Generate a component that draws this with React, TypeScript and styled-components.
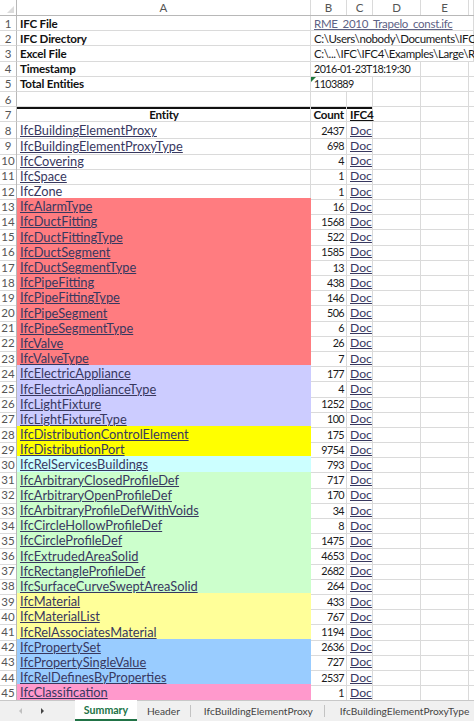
import React from 'react';
import styled, { createGlobalStyle, css } from 'styled-components';

const GlobalStyle = createGlobalStyle`
  html, body {
    margin: 0;
    padding: 0;
    background: #ffffff;
    overflow: hidden;
  }
  body {
    font-family: Lato, 'Open Sans', sans-serif;
    font-size: 12.8px;
    color: #1f1f1f;
  }
`;

const COLS = '17px 294px 36px 26px 48px 48px 1fr';
const GRID = '#dadada';
const ROW_H = '15.2px';

const Sheet = styled.div`
  width: 474px;
  height: 721px;
  display: flex;
  flex-direction: column;
  overflow: hidden;
`;

const Rows = styled.div`
  flex: 1;
  overflow: hidden;
`;

const HeaderRow = styled.div`
  display: grid;
  grid-template-columns: ${COLS};
  height: 16px;
  border-bottom: 1px solid #b8b8b8;
  box-sizing: border-box;
`;

const ColHead = styled.div`
  position: relative;
  display: flex;
  align-items: center;
  justify-content: center;
  color: #555;
  font-size: 11.5px;
  border-right: 1px solid ${GRID};
`;

const Corner = styled(ColHead)`
  border-right: 1px solid #b8b8b8;
  &::after {
    content: '';
    position: absolute;
    right: 2px;
    bottom: 2px;
    border-left: 7px solid transparent;
    border-bottom: 7px solid #dcdcdc;
  }
`;

const Row = styled.div`
  display: grid;
  grid-template-columns: ${COLS};
  height: ${ROW_H};
`;

const RowNum = styled.div`
  display: flex;
  align-items: center;
  justify-content: center;
  color: #555;
  font-size: 11.5px;
  border-right: 1px solid #b8b8b8;
  border-bottom: 1px solid ${GRID};
  box-sizing: border-box;
`;

const Cell = styled.div<{ $fill?: string; $align?: 'left' | 'right' | 'center'; $span?: number; $thick?: boolean }>`
  position: relative;
  display: flex;
  align-items: center;
  justify-content: ${(p) => (p.$align === 'right' ? 'flex-end' : p.$align === 'center' ? 'center' : 'flex-start')};
  padding: 0 2px 0 3px;
  white-space: nowrap;
  box-sizing: border-box;
  border-right: 1px solid ${(p) => p.$fill || GRID};
  border-bottom: 1px solid ${(p) => p.$fill || GRID};
  background: ${(p) => p.$fill || 'transparent'};
  grid-column: span ${(p) => p.$span || 1};
  ${(p) =>
    p.$thick &&
    css`
      box-shadow: inset 0 2px 0 #111;
    `}
`;

const Bold = styled.span`
  font-weight: 700;
  font-size: 11.6px;
  letter-spacing: -0.2px;
  color: #111;
`;

const Num = styled.span`
  font-size: 10.8px;
  letter-spacing: -0.6px;
  color: #1a1a1a;
`;

const Meta = styled.span`
  font-size: 11.5px;
  letter-spacing: -0.38px;
  color: #1a1a1a;
`;

const Link = styled.span<{ $plain?: boolean }>`
  color: #38385f;
  text-decoration: ${(p) => (p.$plain ? 'none' : 'underline')};
  text-decoration-thickness: 1px;
  text-underline-offset: 1px;
`;

const DocLink = styled(Link)`
  font-size: 12.2px;
`;

const HeadLink = styled(Bold)`
  text-decoration: underline;
  text-decoration-thickness: 1px;
  text-underline-offset: 1px;
`;

const FileLink = styled(Meta)`
  color: #5d6285;
  letter-spacing: -0.3px;
  text-decoration: underline;
  text-decoration-thickness: 1px;
  text-underline-offset: 1px;
`;

const Marker = styled.span`
  position: absolute;
  left: 0;
  top: 0;
  border-top: 5px solid #1f7a3c;
  border-right: 5px solid transparent;
`;

const TabBar = styled.div`
  height: 21px;
  display: flex;
  align-items: stretch;
  background: #f0f0f0;
  border-top: 1px solid #c8c8c8;
  box-sizing: border-box;
  font-size: 10.2px;
  color: #444;
  & > * {
    flex-shrink: 0;
  }
`;

const Nav = styled.div`
  width: 75px;
  display: flex;
  align-items: center;
  gap: 19px;
  padding-left: 19px;
  box-sizing: border-box;
`;

const Arrow = styled.span<{ $dir: 'left' | 'right'; $on?: boolean }>`
  width: 0;
  height: 0;
  border-top: 3px solid transparent;
  border-bottom: 3px solid transparent;
  ${(p) =>
    p.$dir === 'left'
      ? css`border-right: 3px solid ${p.$on ? '#444' : '#c0c0c0'};`
      : css`border-left: 3px solid ${p.$on ? '#444' : '#c0c0c0'};`}
`;

const Tab = styled.div<{ $active?: boolean; $sep?: boolean; $pl: number; $pr: number }>`
  display: flex;
  align-items: center;
  padding: 0 ${(p) => p.$pr}px 0 ${(p) => p.$pl}px;
  box-sizing: border-box;
  white-space: nowrap;
  position: relative;
  ${(p) =>
    p.$active &&
    css`
      width: 62px;
      justify-content: center;
      background: #ffffff;
      color: #217346;
      font-weight: 700;
      font-size: 10.6px;
      border-bottom: 2px solid #217346;
      margin-top: -1px;
    `}
  ${(p) =>
    p.$sep &&
    css`
      &::after {
        content: '';
        position: absolute;
        right: 0;
        top: 4px;
        bottom: 4px;
        border-right: 1px solid #c3c3c3;
      }
    `}
`;

const RED = '#ff7c80';
const LAV = '#ccccff';
const YEL = '#ffff00';
const CYN = '#ccffff';
const GRN = '#ccffcc';
const LYEL = '#ffff99';
const BLU = '#99ccff';
const PNK = '#ff99cc';

type Entity = { name: string; count: number; fill?: string; plain?: boolean };

const entities: Entity[] = [
  { name: 'IfcBuildingElementProxy', count: 2437 },
  { name: 'IfcBuildingElementProxyType', count: 698 },
  { name: 'IfcCovering', count: 4 },
  { name: 'IfcSpace', count: 1 },
  { name: 'IfcZone', count: 1, plain: true },
  { name: 'IfcAlarmType', count: 16, fill: RED },
  { name: 'IfcDuctFitting', count: 1568, fill: RED },
  { name: 'IfcDuctFittingType', count: 522, fill: RED },
  { name: 'IfcDuctSegment', count: 1585, fill: RED },
  { name: 'IfcDuctSegmentType', count: 13, fill: RED },
  { name: 'IfcPipeFitting', count: 438, fill: RED },
  { name: 'IfcPipeFittingType', count: 146, fill: RED },
  { name: 'IfcPipeSegment', count: 506, fill: RED },
  { name: 'IfcPipeSegmentType', count: 6, fill: RED },
  { name: 'IfcValve', count: 26, fill: RED },
  { name: 'IfcValveType', count: 7, fill: RED },
  { name: 'IfcElectricAppliance', count: 177, fill: LAV },
  { name: 'IfcElectricApplianceType', count: 4, fill: LAV },
  { name: 'IfcLightFixture', count: 1252, fill: LAV },
  { name: 'IfcLightFixtureType', count: 100, fill: LAV },
  { name: 'IfcDistributionControlElement', count: 175, fill: YEL },
  { name: 'IfcDistributionPort', count: 9754, fill: YEL },
  { name: 'IfcRelServicesBuildings', count: 793, fill: CYN },
  { name: 'IfcArbitraryClosedProfileDef', count: 717, fill: GRN },
  { name: 'IfcArbitraryOpenProfileDef', count: 170, fill: GRN },
  { name: 'IfcArbitraryProfileDefWithVoids', count: 34, fill: GRN },
  { name: 'IfcCircleHollowProfileDef', count: 8, fill: GRN },
  { name: 'IfcCircleProfileDef', count: 1475, fill: GRN },
  { name: 'IfcExtrudedAreaSolid', count: 4653, fill: GRN },
  { name: 'IfcRectangleProfileDef', count: 2682, fill: GRN },
  { name: 'IfcSurfaceCurveSweptAreaSolid', count: 264, fill: GRN },
  { name: 'IfcMaterial', count: 433, fill: LYEL },
  { name: 'IfcMaterialList', count: 767, fill: LYEL },
  { name: 'IfcRelAssociatesMaterial', count: 1194, fill: LYEL },
  { name: 'IfcPropertySet', count: 2636, fill: BLU },
  { name: 'IfcPropertySingleValue', count: 727, fill: BLU },
  { name: 'IfcRelDefinesByProperties', count: 2537, fill: BLU },
  { name: 'IfcClassification', count: 1, fill: PNK },
];

const Blank = () => <Cell />;

const App = () => {
  return (
    <Sheet>
      <GlobalStyle />
      <Rows>
        <HeaderRow>
          <Corner />
          {['A', 'B', 'C', 'D', 'E', ''].map((c, i) => (
            <ColHead key={i}>{c}</ColHead>
          ))}
        </HeaderRow>

        <Row>
          <RowNum>1</RowNum>
          <Cell><Bold>IFC File</Bold></Cell>
          <Cell $span={5}><FileLink>RME_2010_Trapelo_const.ifc</FileLink></Cell>
        </Row>
        <Row>
          <RowNum>2</RowNum>
          <Cell><Bold>IFC Directory</Bold></Cell>
          <Cell $span={5}><Meta>C:\Users\nobody\Documents\IFC\</Meta></Cell>
        </Row>
        <Row>
          <RowNum>3</RowNum>
          <Cell><Bold>Excel File</Bold></Cell>
          <Cell $span={5}><Meta>C:\...\IFC\IFC4\Examples\Large\R</Meta></Cell>
        </Row>
        <Row>
          <RowNum>4</RowNum>
          <Cell><Bold>Timestamp</Bold></Cell>
          <Cell $span={3}><Num>2016-01-23T18:19:30</Num></Cell>
          <Blank />
          <Blank />
        </Row>
        <Row>
          <RowNum>5</RowNum>
          <Cell><Bold>Total Entities</Bold></Cell>
          <Cell $span={2}>
            <Marker />
            <Num>1103889</Num>
          </Cell>
          <Blank />
          <Blank />
          <Blank />
        </Row>
        <Row>
          <RowNum>6</RowNum>
          {Array.from({ length: 6 }).map((_, i) => (
            <Blank key={i} />
          ))}
        </Row>
        <Row>
          <RowNum>7</RowNum>
          <Cell $align="center" $thick><Bold>Entity</Bold></Cell>
          <Cell $align="right" $thick><Bold>Count</Bold></Cell>
          <Cell $thick><HeadLink>IFC4</HeadLink></Cell>
          <Blank />
          <Blank />
          <Blank />
        </Row>

        {entities.map((e, i) => (
          <Row key={e.name}>
            <RowNum>{i + 8}</RowNum>
            <Cell $fill={e.fill}>
              <Link $plain={e.plain}>{e.name}</Link>
            </Cell>
            <Cell $align="right"><Num>{e.count}</Num></Cell>
            <Cell><DocLink>Doc</DocLink></Cell>
            <Blank />
            <Blank />
            <Blank />
          </Row>
        ))}
      </Rows>

      <TabBar>
        <Nav>
          <Arrow $dir="left" />
          <Arrow $dir="right" $on />
        </Nav>
        <Tab $active $pl={0} $pr={0}>Summary</Tab>
        <Tab $sep $pl={10} $pr={11}>Header</Tab>
        <Tab $sep $pl={13} $pr={12}>IfcBuildingElementProxy</Tab>
        <Tab $pl={15} $pr={0}>IfcBuildingElementProxyType</Tab>
      </TabBar>
    </Sheet>
  );
};

export default App;
